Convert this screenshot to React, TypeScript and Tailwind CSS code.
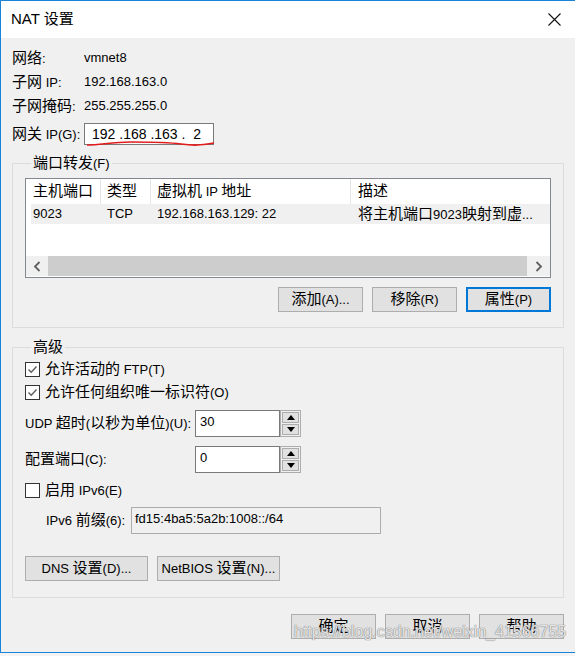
import React from "react";

// split CJK runs so they can be set larger than the Latin text, like the Windows dialog font
function T({ s }: { s: string }) {
  const parts = s.split(/([\u3400-\u9fff]+)/);
  return (
    <span className="whitespace-pre">
      {parts.map((p, i) =>
        i % 2 ? (
          <span key={i} className="text-[15px]">
            {p}
          </span>
        ) : (
          <React.Fragment key={i}>{p}</React.Fragment>
        )
      )}
    </span>
  );
}

function Button({ label, w = "w-[85px]", focused = false }: { label: string; w?: string; focused?: boolean }) {
  return (
    <div
      className={
        focused
          ? `${w} h-[25px] flex items-center justify-center bg-[#e1e1e1] border-2 border-[#0078d7]`
          : `${w} h-[25px] flex items-center justify-center bg-[#e1e1e1] border border-[#adadad]`
      }
    >
      <T s={label} />
    </div>
  );
}

function Check({ checked, label }: { checked: boolean; label: string }) {
  return (
    <div className="h-[23px] flex items-center">
      <div className="w-[15px] h-[15px] border border-[#333333] bg-white flex items-center justify-center">
        {checked && (
          <svg width="11" height="11" viewBox="0 0 11 11">
            <path d="M1.5 5.5 L4.2 8.2 L9.5 2.5" fill="none" stroke="#5d5d5d" strokeWidth="1.4" />
          </svg>
        )}
      </div>
      <span className="ml-[5px]">
        <T s={label} />
      </span>
    </div>
  );
}

function Spin({ value }: { value: string }) {
  return (
    <div className="flex h-[27px] w-[106px]">
      <div className="flex-1 bg-white border border-[#7a7a7a] pl-[4px] pt-[3px] leading-[16px]">{value}</div>
      <div className="w-[21px] flex flex-col border border-[#adadad] bg-[#f0f0f0] p-px gap-px">
        <div className="flex-1 bg-[#e1e1e1] border border-[#adadad] flex items-center justify-center">
          <svg width="8" height="5" viewBox="0 0 8 5">
            <path d="M0 5 L4 0 L8 5 Z" fill="#000" />
          </svg>
        </div>
        <div className="flex-1 bg-[#e1e1e1] border border-[#adadad] flex items-center justify-center">
          <svg width="8" height="5" viewBox="0 0 8 5">
            <path d="M0 0 L8 0 L4 5 Z" fill="#000" />
          </svg>
        </div>
      </div>
    </div>
  );
}

export default function App() {
  return (
    <div
      className="relative w-[575px] h-[656px] bg-[#f4f4f4] overflow-hidden text-[13px] text-black"
      style={{ fontFamily: '"Liberation Sans", "Noto Sans CJK SC", sans-serif' }}
    >
      <div className="h-[653px] flex flex-col border-l border-t border-b border-[#1883d7]">
        {/* title bar */}
        <div className="h-[37px] shrink-0 bg-white flex items-center justify-between pl-[10px] pr-[14px]">
          <span className="text-[15px]">NAT 设置</span>
          <svg width="13" height="13" viewBox="0 0 13 13">
            <path d="M0.5 0.5 L12.5 12.5 M12.5 0.5 L0.5 12.5" stroke="#111" strokeWidth="1.1" />
          </svg>
        </div>

        <div className="flex-1 bg-[#f0f0f0] pl-[11px] pr-[11px] pt-[8px]">
          {[
            ["网络:", "vmnet8"],
            ["子网 IP:", "192.168.163.0"],
            ["子网掩码:", "255.255.255.0"],
          ].map(([k, v]) => (
            <div key={k} className="h-[24px] flex items-center">
              <span className="w-[72px]">
                <T s={k} />
              </span>
              <span>{v}</span>
            </div>
          ))}
          <div className="mt-[5px] h-[22px] flex items-center">
            <span className="w-[72px]">
              <T s="网关 IP(G):" />
            </span>
            <div className="relative w-[130px] h-[22px] bg-white border border-[#7a7a7a] pl-[7px] flex items-center">
              <span className="text-[14px]">192 .168 .163 .&nbsp; 2</span>
              <svg className="absolute left-[1px] top-[16px]" width="130" height="8" viewBox="0 0 130 8">
                <path
                  d="M1 5 C 15 5, 25 2, 45 2 S 80 2, 95 4 S 115 5, 128 3"
                  fill="none"
                  stroke="#e21b1b"
                  strokeWidth="1.6"
                />
              </svg>
            </div>
          </div>

          {/* port forwarding */}
          <fieldset className="mt-[9px] border border-[#dcdcdc] pl-[12px] pr-[12px] pt-[6px] pb-[15px]">
            <legend className="ml-[6px] px-[2px] h-[18px] leading-[18px]">
              <T s="端口转发(F)" />
            </legend>
            <div className="h-[100px] border border-[#828790] bg-white flex flex-col">
              <div className="h-[25px] flex items-stretch">
                <div className="w-[75px] pl-[7px] flex items-center border-r border-[#e5e5e5]">
                  <T s="主机端口" />
                </div>
                <div className="w-[50px] pl-[6px] flex items-center border-r border-[#e5e5e5]">
                  <T s="类型" />
                </div>
                <div className="w-[200px] pl-[6px] flex items-center border-r border-[#e5e5e5]">
                  <T s="虚拟机 IP 地址" />
                </div>
                <div className="flex-1 pl-[7px] flex items-center">
                  <T s="描述" />
                </div>
              </div>
              <div className="ml-[5px] h-[20px] bg-[#f0f0f0] flex items-center">
                <div className="w-[70px] pl-[2px]">9023</div>
                <div className="w-[50px] pl-[6px]">TCP</div>
                <div className="w-[200px] pl-[6px]">192.168.163.129: 22</div>
                <div className="flex-1 pl-[7px] whitespace-nowrap">
                  <T s="将主机端口9023映射到虚..." />
                </div>
              </div>
              <div className="flex-1" />
              <div className="h-[20px] mb-px flex bg-[#f0f0f0]">
                <div className="w-[22px] flex items-center justify-center">
                  <svg width="8" height="11" viewBox="0 0 8 11">
                    <path d="M6.5 1 L2 5.5 L6.5 10" fill="none" stroke="#606060" strokeWidth="1.8" />
                  </svg>
                </div>
                <div className="flex-1 bg-[#cdcdcd]" />
                <div className="w-[23px] flex items-center justify-center">
                  <svg width="8" height="11" viewBox="0 0 8 11">
                    <path d="M1.5 1 L6 5.5 L1.5 10" fill="none" stroke="#606060" strokeWidth="1.8" />
                  </svg>
                </div>
              </div>
            </div>
            <div className="mt-[9px] flex justify-end gap-[9px]">
              <Button label="添加(A)..." />
              <Button label="移除(R)" />
              <Button label="属性(P)" focused />
            </div>
          </fieldset>

          {/* advanced */}
          <fieldset className="mt-[10px] border border-[#dcdcdc] pl-[12px] pr-[12px] pt-[2px] pb-[16px]">
            <legend className="ml-[6px] px-[2px] h-[18px] leading-[18px]">
              <T s="高级" />
            </legend>
            <Check checked label="允许活动的 FTP(T)" />
            <Check checked label="允许任何组织唯一标识符(O)" />
            <div className="mt-[6px] flex items-center">
              <span className="w-[170px]">
                <T s="UDP 超时(以秒为单位)(U):" />
              </span>
              <Spin value="30" />
            </div>
            <div className="mt-[9px] flex items-center">
              <span className="w-[170px]">
                <T s="配置端口(C):" />
              </span>
              <Spin value="0" />
            </div>
            <div className="mt-[6px]">
              <Check checked={false} label="启用 IPv6(E)" />
            </div>
            <div className="mt-[5px] flex items-center">
              <span className="w-[106px] pl-[21px]">
                <T s="IPv6 前缀(6):" />
              </span>
              <div className="w-[250px] h-[27px] border border-[#adadad] bg-[#f0f0f0] pl-[3px] pt-[3px] leading-[16px]">
                fd15:4ba5:5a2b:1008::/64
              </div>
            </div>
            <div className="mt-[22px] flex gap-[9px]">
              <Button label="DNS 设置(D)..." w="w-[123px]" />
              <Button label="NetBIOS 设置(N)..." w="w-[123px]" />
            </div>
          </fieldset>

          <div className="mt-[16px] flex justify-end gap-[9px]">
            <Button label="确定" />
            <Button label="取消" />
            <Button label="帮助" />
          </div>
        </div>
      </div>

      {/* blog watermark over the bottom buttons */}
      <span className="absolute left-[294px] top-[620px] text-[16px] text-white/80 [text-shadow:0_0_1px_#777,0_0_1px_#777] whitespace-nowrap">
        https://blog.csdn.net/weixin_41566755
      </span>
    </div>
  );
}
